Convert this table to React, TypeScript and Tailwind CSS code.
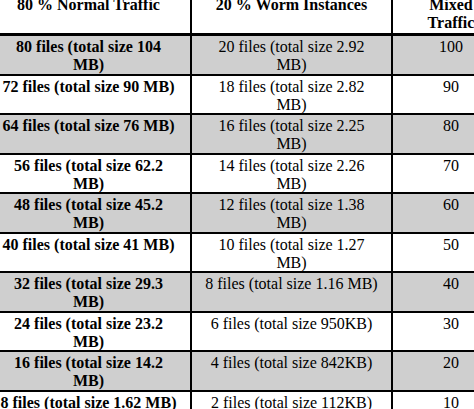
import React from "react";

const rows: [string, string, string][] = [
  ["80 files (total size 104 MB)", "20 files (total size 2.92 MB)", "100"],
  ["72 files (total size 90 MB)", "18 files (total size 2.82 MB)", "90"],
  ["64 files (total size 76 MB)", "16 files (total size 2.25 MB)", "80"],
  ["56 files (total size 62.2 MB)", "14 files (total size 2.26 MB)", "70"],
  ["48 files (total size 45.2 MB)", "12 files (total size 1.38 MB)", "60"],
  ["40 files (total size 41 MB)", "10 files (total size 1.27 MB)", "50"],
  ["32 files (total size 29.3 MB)", "8 files (total size 1.16 MB)", "40"],
  ["24 files (total size 23.2 MB)", "6 files (total size 950KB)", "30"],
  ["16 files (total size 14.2 MB)", "4 files (total size 842KB)", "20"],
  ["8 files (total size 1.62 MB)", "2 files (total size 112KB)", "10"],
];

export default function App() {
  return (
    <div className="w-[474px] h-[409px] overflow-hidden bg-white font-['Liberation_Serif',serif] text-[16px] leading-[18.4px] text-black">
      <div className="ml-[-13px] mt-[-6px] w-max grid grid-cols-[205px_201px_116px]">
        <div className="h-[42px] border-b-[3px] border-r-2 border-black px-[13px] pt-[2px] text-center font-bold">
          80 % Normal Traffic
        </div>
        <div className="h-[42px] border-b-[3px] border-r-2 border-black px-[12px] pt-[2px] text-center font-bold">
          20 % Worm Instances
        </div>
        <div className="h-[42px] border-b-[3px] border-black px-[12px] pt-[2px] text-center font-bold">
          Mixed Traffic
        </div>
        {rows.map((r, i) => {
          const bg = i % 2 === 0 ? "bg-[#cfcfcf]" : "bg-white";
          return (
            <React.Fragment key={i}>
              <div className={`${bg} h-[39.5px] border-b-2 border-r-2 border-black px-[13px] pt-[2px] text-center font-bold`}>
                {r[0]}
              </div>
              <div className={`${bg} h-[39.5px] border-b-2 border-r-2 border-black px-[12px] pt-[2px] text-center`}>
                {r[1]}
              </div>
              <div className={`${bg} h-[39.5px] border-b-2 border-black px-[12px] pt-[2px] text-center`}>
                {r[2]}
              </div>
            </React.Fragment>
          );
        })}
      </div>
    </div>
  );
}
